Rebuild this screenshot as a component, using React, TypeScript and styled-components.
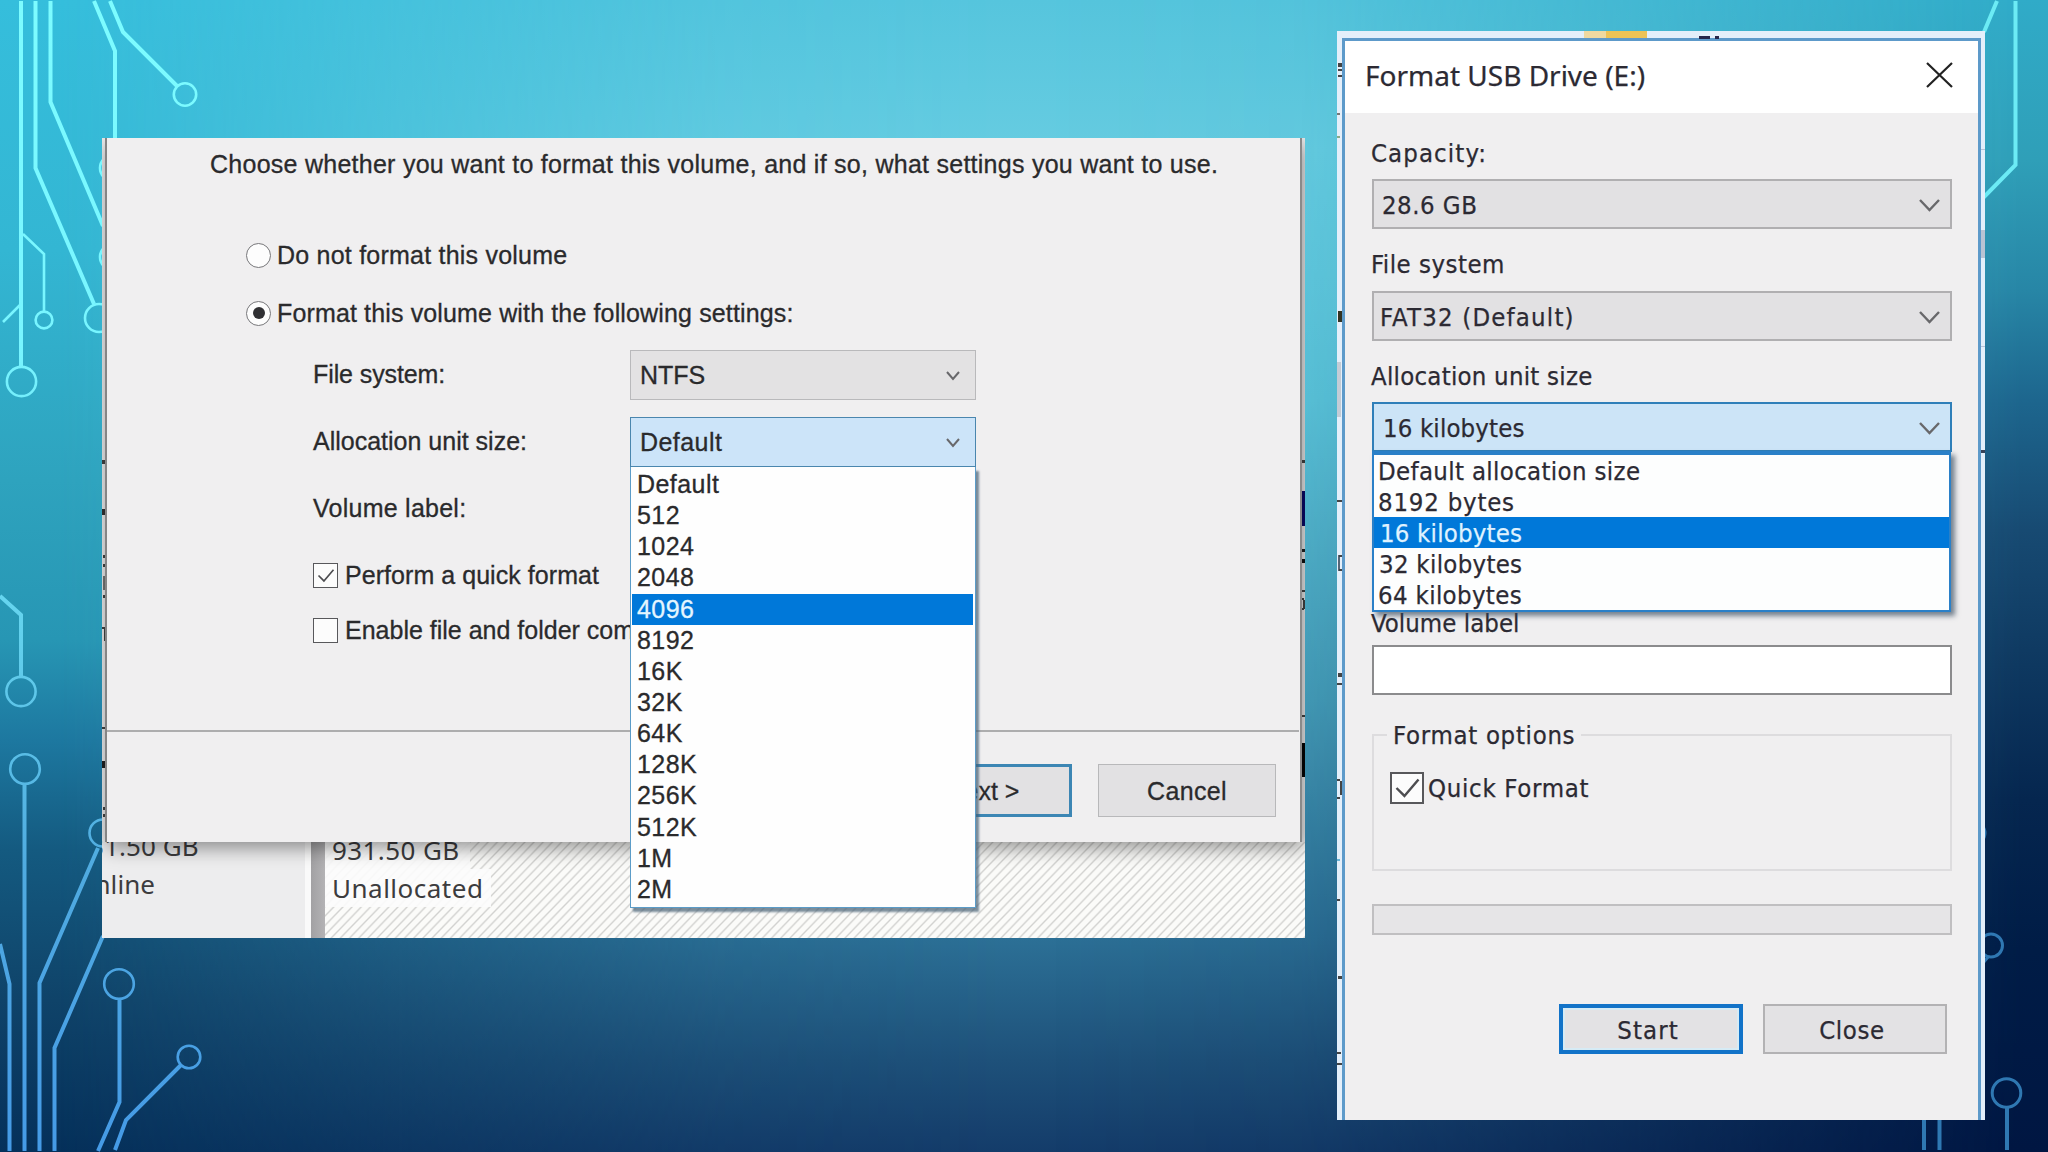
import React from "react";
import styled, { createGlobalStyle, css } from "styled-components";

const arial = `"Liberation Sans", Arial, sans-serif`;
const tahoma = `"DejaVu Sans Condensed", "DejaVu Sans", Tahoma, sans-serif`;
const segoe = `"Noto Sans", "Open Sans", "Segoe UI", sans-serif`;

const GlobalStyle = createGlobalStyle`
  * { box-sizing: border-box; }
  body { margin: 0; overflow: hidden; }
`;

const Slide = styled.main`
  position: relative;
  display: flex;
  align-items: flex-start;
  width: 2048px;
  height: 1152px;
  overflow: hidden;
  isolation: isolate;
  background: linear-gradient(#35bedc 0, #33b6d3 250px, #2ea3be 480px, #2796b4 640px, #1d78a0 740px, #145a80 850px, #0f4369 1000px, #05305a 1152px);
`;

const Glow = styled.div<{ $side: "middle" | "right" }>`
  position: absolute;
  inset: 0;
  z-index: -2;
  ${(p) =>
    p.$side === "middle"
      ? css`
          background: linear-gradient(#56c5dd 0, #66cce1 150px, #5cc6db 400px, #46a0bb 700px, #2c7096 938px, #1e517a 1060px, #143c6a 1152px);
          mask-image: linear-gradient(90deg, transparent 60px, rgba(0, 0, 0, 0.5) 400px, rgba(0, 0, 0, 0.88) 720px, #000 1000px);
        `
      : css`
          background: linear-gradient(#30abc8 0, #2f9fb8 160px, #2786a6 290px, #1d668e 400px, #174a72 530px, #0f3a62 650px, #05264f 800px, #001c46 950px, #001642 1152px);
          mask-image: linear-gradient(90deg, transparent 1050px, rgba(0, 0, 0, 0.08) 1300px, rgba(0, 0, 0, 0.5) 1640px, #000 2020px);
        `}
`;

const Circuit = styled.svg`
  position: absolute;
  inset: 0;
  z-index: -1;
  fill: none;
`;

/* ---------- shared pieces ---------- */

const Label = styled.span<{ $spacing?: number }>`
  white-space: pre;
  letter-spacing: ${(p) => p.$spacing ?? 0}px;
`;

const Mark = styled.i<{ $x: number; $y: number; $w: number; $h: number; $color?: string }>`
  position: absolute;
  left: ${(p) => p.$x}px;
  top: ${(p) => p.$y}px;
  width: ${(p) => p.$w}px;
  height: ${(p) => p.$h}px;
  background: ${(p) => p.$color ?? "#444"};
`;

/* ---------- volume wizard ---------- */

const WizardShot = styled.section`
  position: relative;
  width: 1203px;
  height: 800px;
  margin: 138px 0 0 102px;
  background: #ededee;
  overflow: hidden;
  font: 25px ${arial};
  color: #2a2a2c;
  -webkit-text-stroke: 0.3px currentColor;
`;

const Wizard = styled.div`
  position: relative;
  z-index: 1;
  display: flex;
  flex-direction: column;
  width: 1197px;
  height: 704px;
  margin-left: 3px;
  padding-top: 11px;
  background: #f0eff0;
  border-left: 2px solid #858585;
  border-right: 2px solid #8a8a8a;
  box-shadow: 2px 6px 18px rgba(0, 0, 0, 0.42);
`;

const Heading = styled.div`
  height: 30px;
  line-height: 31px;
  padding-left: 103px;
`;

const Choice = styled.label<{ $top: number; $left: number; $gap: number }>`
  display: flex;
  align-items: center;
  gap: ${(p) => p.$gap}px;
  height: 30px;
  margin-top: ${(p) => p.$top}px;
  padding-left: ${(p) => p.$left}px;
`;

const Clipped = styled.div`
  width: 285px;
  overflow: hidden;
`;

const Radio = styled.span<{ $on?: boolean }>`
  display: grid;
  place-items: center;
  flex: none;
  width: 25px;
  height: 25px;
  border: 1.5px solid #77777a;
  border-radius: 50%;
  background: #fdfdfd;
  &::after {
    content: "";
    width: 12px;
    height: 12px;
    border-radius: 50%;
    background: ${(p) => (p.$on ? "#303033" : "transparent")};
  }
`;

const CheckBox = styled.span<{ $w: number; $h: number; $line: number }>`
  display: grid;
  place-items: center;
  flex: none;
  width: ${(p) => p.$w}px;
  height: ${(p) => p.$h}px;
  border: ${(p) => p.$line}px solid #58585b;
  background: #fcfcfc;
`;

const Field = styled.div<{ $top: number }>`
  display: grid;
  grid-template-columns: 317px 346px;
  align-items: center;
  height: 50px;
  margin-top: ${(p) => p.$top}px;
  padding-left: 206px;
  & > span { padding-bottom: 2px; }
`;

const Combo = styled.div<{ $open?: boolean }>`
  display: flex;
  align-items: center;
  justify-content: space-between;
  height: 50px;
  padding: 1px 15px 0 9px;
  border: 1px solid ${(p) => (p.$open ? "#4a86ae" : "#b9b9bb")};
  background: ${(p) => (p.$open ? "#cce4f9" : "#e3e2e3")};
`;

const Footer = styled.div`
  display: flex;
  justify-content: flex-end;
  gap: 26px;
  height: 112px;
  margin: 85px 1px 0 0;
  padding: 32px 23px 0 0;
  border-top: 2px solid #adadae;
`;

const WizardButton = styled.button<{ $primary?: boolean }>`
  width: 178px;
  height: 53px;
  padding: 1px 0 0;
  border: ${(p) => (p.$primary ? "3px solid #3c86b4" : "1.5px solid #b8b8ba")};
  background: #e2e1e3;
  font: inherit;
  letter-spacing: ${(p) => (p.$primary ? 0 : 0.35)}px;
  color: inherit;
  -webkit-text-stroke: inherit;
`;

const WizardList = styled.div`
  position: absolute;
  z-index: 2;
  left: 528px;
  top: 329px;
  width: 346px;
  height: 441px;
  padding-top: 2px;
  border: 1.5px solid #5b9cc8;
  border-top: none;
  background: #fefefe;
  box-shadow: 3px 4px 2px rgba(70, 95, 115, 0.7);
  clip-path: inset(0 -8px -8px 0);
`;

const WizardOption = styled.div<{ $active?: boolean }>`
  height: 31.15px;
  margin: 0 2px 0 1px;
  padding-left: 5px;
  line-height: 31.5px;
  letter-spacing: 0.45px;
  background: ${(p) => (p.$active ? "#0078d9" : "transparent")};
  color: ${(p) => (p.$active ? "#e4f6ff" : "inherit")};
`;

const DiskRow = styled.div`
  display: grid;
  grid-template-columns: 203px 6px 14px 1fr;
  height: 96px;
  font: 26px ${segoe};
  color: #3c3c3e;
  -webkit-text-stroke: 0;
`;

const DiskInfo = styled.div`
  display: flex;
  flex-direction: column;
  margin: -15px 0 0 -28px;
  line-height: 38px;
`;

const DiskEdge = styled.div<{ $color: string }>`
  background: ${(p) => p.$color};
`;

const Hatched = styled.div`
  background: repeating-linear-gradient(134deg, #fbfbf9 0 3.8px, #d2d2d0 5.2px, #fbfbf9 6.6px);
`;

const Patch = styled.div<{ $w: number }>`
  display: flex;
  flex-direction: column;
  width: ${(p) => p.$w}px;
  padding-left: 7px;
  background: rgba(252, 252, 252, 0.9);
  line-height: 38px;
  &:first-child { margin-top: -11px; }
`;

/* ---------- format dialog ---------- */

const FormatShot = styled.section`
  position: relative;
  width: 648px;
  height: 1089px;
  margin: 31px 0 0 32px;
  padding: 7px 4px 0 5px;
  background: #e4effa;
  overflow: hidden;
  font: 25.5px ${tahoma};
  color: #2c2a33;
  -webkit-text-stroke: 0.25px currentColor;
`;

const FormatWindow = styled.div`
  height: 1082px;
  border: solid #5d9aca;
  border-width: 3px 3px 0 3px;
  background: #f0eff0;
`;

const TitleBar = styled.header`
  display: flex;
  align-items: center;
  justify-content: space-between;
  height: 72px;
  padding: 0 25px 4px 20px;
  background: #fff;
  font: 28px ${segoe};
`;

const FormatBody = styled.div`
  display: flex;
  flex-direction: column;
  padding: 26px 26px 0 27px;
`;

const FormatLabel = styled.div<{ $top?: number; $bottom?: number }>`
  height: 30px;
  line-height: 28px;
  margin-top: ${(p) => p.$top ?? 0}px;
  margin-bottom: ${(p) => p.$bottom ?? 10}px;
  margin-left: -1px;
`;

const FormatCombo = styled.div<{ $open?: boolean; $inset?: number }>`
  position: relative;
  display: flex;
  align-items: center;
  justify-content: space-between;
  height: 50px;
  padding: 2px 10px 0 ${(p) => p.$inset ?? 8}px;
  border: 2px solid ${(p) => (p.$open ? "#2f7fb9" : "#b0afb1")};
  background: ${(p) => (p.$open ? "#cce4f7" : "#e2e1e3")};
`;

const FormatList = styled.div`
  position: absolute;
  z-index: 2;
  left: -2px;
  top: 47px;
  width: 579px;
  height: 161px;
  border: 2px solid #2a80c8;
  border-top-width: 4px;
  background: #fdfefe;
  box-shadow: 4px 4px 5px rgba(50, 70, 90, 0.65);
`;

const FormatOption = styled.div<{ $active?: boolean; $inset: number }>`
  height: 31px;
  line-height: 33px;
  padding-left: ${(p) => p.$inset}px;
  background: ${(p) => (p.$active ? "#0078d9" : "transparent")};
  color: ${(p) => (p.$active ? "#dff2ff" : "inherit")};
`;

const TextInput = styled.div`
  height: 50px;
  border: 2px solid #8b8b8d;
  background: #fff;
`;

const Group = styled.fieldset`
  height: 151px;
  margin: 25px 0 0;
  padding: 0 0 0 16px;
  border: 2px solid #dddcde;
`;

const Legend = styled.legend`
  height: 30px;
  line-height: 31px;
  margin-left: -3px;
  padding: 0 6px 0 6px;
`;

const QuickRow = styled.label`
  display: flex;
  align-items: center;
  gap: 4px;
  height: 32px;
  margin-top: 22px;
`;

const Progress = styled.div`
  height: 31px;
  margin-top: 33px;
  border: 2px solid #c0bfc1;
  background: #e6e5e7;
`;

const Actions = styled.div`
  display: flex;
  justify-content: flex-end;
  gap: 20px;
  margin: 69px 5px 0 0;
`;

const FormatButton = styled.button<{ $primary?: boolean }>`
  width: 184px;
  height: 50px;
  padding: 2px 6px 0 0;
  border: ${(p) => (p.$primary ? "4px solid #1273c8" : "2px solid #b3b2b4")};
  background: #e3e2e4;
  box-shadow: ${(p) => (p.$primary ? "inset 0 0 0 2px #d6ebf5" : "none")};
  font: inherit;
  letter-spacing: ${(p) => (p.$primary ? 1.1 : 0.6)}px;
  color: inherit;
  -webkit-text-stroke: inherit;
`;

/* ---------- drawings ---------- */

const Chevron = ({ w, h, stroke }: { w: number; h: number; stroke: number }) => (
  <svg width={w} height={h} viewBox={`0 0 ${w} ${h}`} fill="none" stroke="#68686b" strokeWidth={stroke}>
    <path d={`M1 1L${w / 2} ${h - 2}L${w - 1} 1`} />
  </svg>
);

const Tick = ({ w, h, stroke }: { w: number; h: number; stroke: number }) => (
  <svg width={w} height={h} viewBox="0 0 20 18" fill="none" stroke="#4d4d50" strokeWidth={stroke}>
    <path d="M1 9L7.5 15.5L19 2" />
  </svg>
);

const CircuitArt = () => (
  <Circuit width="2048" height="1152" viewBox="0 0 2048 1152">
    <defs>
      <linearGradient id="trace" gradientUnits="userSpaceOnUse" x1="0" y1="0" x2="0" y2="1152">
        <stop offset="0" stopColor="#7dfcff" />
        <stop offset="0.3" stopColor="#78f5ff" />
        <stop offset="0.56" stopColor="#62cfec" />
        <stop offset="0.75" stopColor="#50abe0" />
        <stop offset="1" stopColor="#459ae6" />
      </linearGradient>
    </defs>
    <g stroke="url(#trace)" strokeWidth="4">
      <path d="M21 1L21.01 366M35.5 1V168L94 304M50.5 1V102L103 226M94 1L115 51V140M110 1L123 32L177 86" />
      <path d="M0 596L21 615V662M24.5 784L24.51 1151M98 848L39.5 983V1151M103 936L54.5 1048V1151M0 944L9.5 984V1151M119.5 999V1102L98 1151M181 1065L126 1120L115 1150" />
    </g>
    <g stroke="url(#trace)" strokeWidth="2.6">
      <path d="M21 660V677" strokeWidth="4" />
      <path d="M23 234L44 254V311M20 305L3 322" />
      <circle cx="21.5" cy="381.5" r="14.6" />
      <circle cx="99" cy="318" r="14" />
      <circle cx="185" cy="94.5" r="11.2" />
      <circle cx="44" cy="320" r="8.4" />
      <circle cx="113" cy="168" r="13" />
      <circle cx="113" cy="257" r="13" />
      <circle cx="21" cy="691.5" r="14.6" />
      <circle cx="25" cy="769" r="14.8" />
      <circle cx="103" cy="833" r="13.5" />
      <circle cx="119" cy="984" r="14.8" />
      <circle cx="189" cy="1057" r="11.3" />
    </g>
    <g stroke="#6cebf5" strokeWidth="4">
      <path d="M1997 1L1984 32M2015.5 1V165L1983 198" />
    </g>
    <g stroke="#2f78b2" strokeWidth="3">
      <path d="M1924 1118V1150M1939.5 1118V1150M2007 1108V1150" strokeWidth="4" />
      <circle cx="1991" cy="945.5" r="11.5" />
      <circle cx="2006.5" cy="1093" r="14.3" />
      <circle cx="1974" cy="833" r="11" />
      <path d="M1988 957L1983 963" />
    </g>
  </Circuit>
);

const sizes = ["Default", "512", "1024", "2048", "4096", "8192", "16K", "32K", "64K", "128K", "256K", "512K", "1M", "2M"];

const units = [
  { text: "Default allocation size", inset: 4, spacing: 0.35 },
  { text: "8192 bytes", inset: 4, spacing: 0.8 },
  { text: "16 kilobytes", inset: 6, spacing: 0.2 },
  { text: "32 kilobytes", inset: 5, spacing: 0.3 },
  { text: "64 kilobytes", inset: 4, spacing: 0.35 },
];

/* slivers of the windows that stick out behind the wizard */
const wizardMarks: [number, number, number, number, string?][] = [
  [0, 322, 4, 4],
  [0, 371, 4, 6, "#333"],
  [1, 417, 3, 3],
  [1, 426, 3, 3],
  [1, 438, 3, 14, "#777"],
  [1, 457, 3, 3],
  [0, 489, 3, 2],
  [2, 491, 2, 12],
  [0, 589, 4, 2],
  [0, 623, 4, 7, "#222"],
  [1, 669, 3, 3],
  [1, 676, 3, 3],
  [1200, 322, 3, 3],
  [1200, 353, 3, 35, "#0a0a6a"],
  [1200, 411, 3, 3, "#222"],
  [1199, 421, 4, 4, "#111"],
  [1200, 452, 3, 2],
  [1199, 460, 3, 2],
  [1201, 462, 2, 9],
  [1199, 470, 3, 2],
  [1200, 577, 3, 2],
  [1200, 605, 3, 34, "#050505"],
];

/* slivers of the explorer window behind the format dialog */
const formatMarks: [number, number, number, number, string?][] = [
  [247, 0, 22, 7, "#efd9a0"],
  [269, 0, 41, 7, "#edc355"],
  [362, 5, 11, 3, "#26264a"],
  [378, 5, 4, 3, "#26264a"],
  [1, 32, 4, 4],
  [1, 38, 4, 2],
  [1, 44, 4, 2],
  [0, 82, 3, 2, "#777"],
  [0, 105, 3, 2, "#8a8"],
  [1, 280, 4, 11, "#332"],
  [0, 331, 4, 55, "#c3ccd6"],
  [0, 469, 5, 2],
  [1, 524, 2, 16, "#567"],
  [2, 524, 3, 2],
  [2, 538, 3, 2],
  [1, 642, 4, 4],
  [0, 652, 5, 2],
  [0, 748, 3, 2],
  [3, 750, 2, 14],
  [0, 766, 3, 2],
  [0, 828, 3, 2, "#6ab5d8"],
  [0, 868, 3, 2],
  [1, 945, 4, 3],
  [0, 1021, 4, 2],
  [0, 1032, 5, 2],
  [644, 118, 4, 1, "#b8c4d8"],
  [644, 199, 4, 28, "#b9c3d3"],
  [644, 315, 4, 1, "#b8c4d8"],
  [644, 419, 4, 3, "#3a4458"],
];

const VolumeWizard = () => (
  <WizardShot>
    <Wizard>
      <Heading>
        <Label $spacing={0.26}>Choose whether you want to format this volume, and if so, what settings you want to use.</Label>
      </Heading>
      <Choice $top={61} $left={139} $gap={6}>
        <Radio />
        <Label $spacing={0.22}>Do not format this volume</Label>
      </Choice>
      <Choice $top={28} $left={139} $gap={6}>
        <Radio $on />
        <Label $spacing={0.14}>Format this volume with the following settings:</Label>
      </Choice>
      <Field $top={22}>
        <Label $spacing={-0.1}>File system:</Label>
        <Combo>
          <Label>NTFS</Label>
          <Chevron w={14} h={10} stroke={2} />
        </Combo>
      </Field>
      <Field $top={17}>
        <Label>Allocation unit size:</Label>
        <Combo $open>
          <Label $spacing={0.45}>Default</Label>
          <Chevron w={14} h={10} stroke={2} />
        </Combo>
      </Field>
      <Field $top={17}>
        <Label $spacing={0.25}>Volume label:</Label>
      </Field>
      <Choice $top={26} $left={206} $gap={7}>
        <CheckBox $w={25} $h={25} $line={1.5}>
          <Tick w={18} h={15} stroke={2} />
        </CheckBox>
        <Label $spacing={0.05}>Perform a quick format</Label>
      </Choice>
      <Choice $top={25} $left={206} $gap={7}>
        <CheckBox $w={25} $h={25} $line={1.5} />
        <Clipped>
          <Label>Enable file and folder com</Label>
        </Clipped>
      </Choice>
      <Footer>
        <WizardButton $primary>Next &gt;</WizardButton>
        <WizardButton>Cancel</WizardButton>
      </Footer>
    </Wizard>
    <DiskRow>
      <DiskInfo>
        <Label $spacing={0.1}>931.50 GB</Label>
        <Label $spacing={0.1}>Online</Label>
      </DiskInfo>
      <DiskEdge $color="#fafafa" />
      <DiskEdge $color="linear-gradient(90deg, #a2a1a3, #b4b3b5)" />
      <Hatched>
        <Patch $w={145}>
          <Label $spacing={0.4}>931.50 GB</Label>
        </Patch>
        <Patch $w={166}>
          <Label $spacing={0.5}>Unallocated</Label>
        </Patch>
      </Hatched>
    </DiskRow>
    {wizardMarks.map(([x, y, w, h, color], i) => (
      <Mark key={i} $x={x} $y={y} $w={w} $h={h} $color={color} />
    ))}
    <WizardList>
      {sizes.map((size) => (
        <WizardOption key={size} $active={size === "4096"}>
          {size}
        </WizardOption>
      ))}
    </WizardList>
  </WizardShot>
);

const FormatDialog = () => (
  <FormatShot>
    {formatMarks.map(([x, y, w, h, color], i) => (
      <Mark key={i} $x={x} $y={y} $w={w} $h={h} $color={color} />
    ))}
    <FormatWindow>
      <TitleBar>
        <Label>Format USB Drive (E:)</Label>
        <svg width="27" height="26" viewBox="0 0 27 26" stroke="#222" strokeWidth="2.2">
          <path d="M1 1L26 25M26 1L1 25" />
        </svg>
      </TitleBar>
      <FormatBody>
        <FormatLabel>
          <Label $spacing={1.1}>Capacity:</Label>
        </FormatLabel>
        <FormatCombo>
          <Label $spacing={0.5}>28.6 GB</Label>
          <Chevron w={21} h={13} stroke={2.4} />
        </FormatCombo>
        <FormatLabel $top={21} $bottom={11}>
          <Label $spacing={0.5}>File system</Label>
        </FormatLabel>
        <FormatCombo $inset={6}>
          <Label $spacing={1.2}>FAT32 (Default)</Label>
          <Chevron w={21} h={13} stroke={2.4} />
        </FormatCombo>
        <FormatLabel $top={21}>
          <Label $spacing={0.25}>Allocation unit size</Label>
        </FormatLabel>
        <FormatCombo $open $inset={9}>
          <Label $spacing={0.15}>16 kilobytes</Label>
          <Chevron w={21} h={13} stroke={2.4} />
          <FormatList>
            {units.map((unit) => (
              <FormatOption key={unit.text} $inset={unit.inset} $active={unit.text === "16 kilobytes"}>
                <Label $spacing={unit.spacing}>{unit.text}</Label>
              </FormatOption>
            ))}
          </FormatList>
        </FormatCombo>
        <FormatLabel $top={157} $bottom={6}>
          <Label $spacing={0.05}>Volume label</Label>
        </FormatLabel>
        <TextInput />
        <Group>
          <Legend>
            <Label $spacing={0.7}>Format options</Label>
          </Legend>
          <QuickRow>
            <CheckBox $w={34} $h={32} $line={2.5}>
              <Tick w={27} h={22} stroke={2} />
            </CheckBox>
            <Label $spacing={0.7}>Quick Format</Label>
          </QuickRow>
        </Group>
        <Progress />
        <Actions>
          <FormatButton $primary>Start</FormatButton>
          <FormatButton>Close</FormatButton>
        </Actions>
      </FormatBody>
    </FormatWindow>
  </FormatShot>
);

export default function App() {
  return (
    <>
      <GlobalStyle />
      <Slide>
        <Glow $side="middle" />
        <Glow $side="right" />
        <CircuitArt />
        <VolumeWizard />
        <FormatDialog />
      </Slide>
    </>
  );
}
